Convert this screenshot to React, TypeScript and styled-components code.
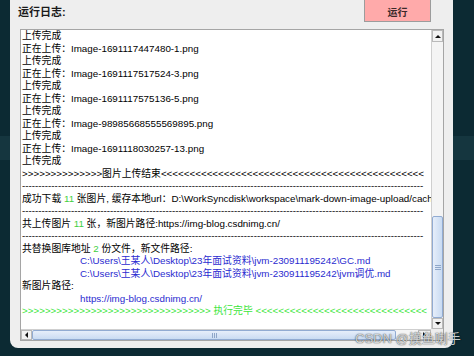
import React from 'react';
import styled, { createGlobalStyle } from 'styled-components';

const GlobalStyle = createGlobalStyle`
  html, body { margin: 0; padding: 0; }
  body {
    width: 474px;
    height: 356px;
    overflow: hidden;
    background: linear-gradient(
      to bottom,
      #0c2a33 0px, #0c2a33 136px,
      #15363f 136px, #15363f 160px,
      #0c2a33 160px, #0c2a33 356px
    );
    font-family: "Liberation Sans", "Noto Sans CJK SC", sans-serif;
  }
`;

const Page = styled.div`
  position: relative;
  width: 474px;
  height: 356px;
  box-sizing: border-box;
  padding: 0 21px 8px 10px;
  display: flex;
`;

const Panel = styled.div`
  flex: 1;
  background: #eeeeee;
  border-radius: 0 0 8px 8px;
  padding: 0 9px 7px 8px;
  display: flex;
  flex-direction: column;
  min-width: 0;
`;

const Header = styled.div`
  height: 29px;
  flex: none;
  display: flex;
  justify-content: space-between;
  align-items: flex-start;
`;

const Label = styled.div`
  padding-top: 5px;
  font-size: 11px;
  line-height: 15px;
  font-weight: bold;
  color: #1a1a1a;
`;

const RunButton = styled.button`
  width: 67px;
  height: 25px;
  margin-top: -3px;
  margin-right: 13px;
  padding: 3px 0 0;
  box-sizing: border-box;
  background: #ffaaaa;
  border: 1px solid #9c9c9c;
  font-family: "Liberation Sans", "Noto Sans CJK SC", sans-serif;
  font-size: 10px;
  font-weight: bold;
  color: #3a2a2a;
  display: flex;
  align-items: center;
  justify-content: center;
`;

const ScrollPane = styled.div`
  flex: 1;
  margin-left: 2px;
  border: 1px solid #a5a5a5;
  background: #ffffff;
  display: grid;
  grid-template-columns: 1fr 12px;
  grid-template-rows: 1fr 11px;
  min-height: 0;
`;

const Viewport = styled.div`
  overflow: hidden;
  padding-left: 1px;
  font-size: 9.8px;
  line-height: 12.5px;
  white-space: pre;
  color: #000000;
`;

const Row = styled.div<{ $indent?: boolean }>`
  height: 12.5px;
  padding-left: ${p => (p.$indent ? '58px' : '0')};
`;

const Seg = styled.span<{ $tone?: 'green' | 'blue' | 'lime' }>`
  color: ${p =>
    p.$tone === 'green' ? '#3fcf3f' :
    p.$tone === 'blue' ? '#2b2bd0' :
    p.$tone === 'lime' ? '#3de63d' : 'inherit'};
`;

const VScroll = styled.div`
  display: flex;
  flex-direction: column;
  background: #f4f4f4;
  border-left: 1px solid #cfcfcf;
  box-sizing: border-box;
`;

const HScroll = styled.div`
  display: flex;
  flex-direction: row;
  background: #f4f4f4;
  border-top: 1px solid #cfcfcf;
  box-sizing: border-box;
`;

const Corner = styled.div`
  background: #eeeeee;
`;

const ArrowBtn = styled.div<{ $w?: number; $h?: number }>`
  flex: none;
  width: ${p => (p.$w ? `${p.$w}px` : 'auto')};
  height: ${p => (p.$h ? `${p.$h}px` : 'auto')};
  box-sizing: border-box;
  background: #f2f2f2;
  border: 1px solid #b9b9b9;
  display: flex;
  align-items: center;
  justify-content: center;
`;

const Tri = styled.span<{ $dir: 'up' | 'down' | 'left' | 'right' }>`
  width: 0;
  height: 0;
  ${p =>
    p.$dir === 'up'
      ? 'border-left: 3px solid transparent; border-right: 3px solid transparent; border-bottom: 3px solid #111;'
      : p.$dir === 'down'
      ? 'border-left: 3px solid transparent; border-right: 3px solid transparent; border-top: 3px solid #111;'
      : p.$dir === 'left'
      ? 'border-top: 3px solid transparent; border-bottom: 3px solid transparent; border-right: 3px solid #111;'
      : 'border-top: 3px solid transparent; border-bottom: 3px solid transparent; border-left: 3px solid #111;'}
`;

const VTrack = styled.div`
  flex: 1;
  display: flex;
  flex-direction: column;
  justify-content: flex-end;
`;

const HTrack = styled.div`
  flex: 1;
  display: flex;
  flex-direction: row;
`;

const VThumb = styled.div`
  height: 102px;
  box-sizing: border-box;
  border: 1px solid #91abd2;
  border-radius: 2px;
  background: linear-gradient(to right, #e6eefa, #c9dbf2);
  display: flex;
  align-items: center;
  justify-content: center;
  &::after {
    content: '';
    width: 6px;
    height: 5px;
    background: repeating-linear-gradient(to bottom, #8ea6c8 0 1px, transparent 1px 2px);
  }
`;

const HThumb = styled.div`
  width: 364px;
  box-sizing: border-box;
  border: 1px solid #91abd2;
  border-radius: 2px;
  background: linear-gradient(to bottom, #e6eefa, #c9dbf2);
  display: flex;
  align-items: center;
  justify-content: center;
  &::after {
    content: '';
    width: 5px;
    height: 5px;
    background: repeating-linear-gradient(to right, #8ea6c8 0 1px, transparent 1px 2px);
  }
`;

const Watermark = styled.div`
  position: absolute;
  left: 355px;
  top: 331px;
  font-size: 13px;
  line-height: 16px;
  color: rgba(235, 238, 240, 0.85);
  text-shadow: 0 0 1px rgba(0, 0, 0, 0.75), 0 0 2px rgba(0, 0, 0, 0.3);
  white-space: nowrap;
  pointer-events: none;
`;

type Tone = 'green' | 'blue' | 'lime';
type Line = { segs: { t: string; tone?: Tone }[]; indent?: boolean };

const plain = (t: string): Line => ({ segs: [{ t }] });
const dash = '-'.repeat(123);

const lines: Line[] = [
  plain('上传完成'),
  plain('正在上传：Image-1691117447480-1.png'),
  plain('上传完成'),
  plain('正在上传：Image-1691117517524-3.png'),
  plain('上传完成'),
  plain('正在上传：Image-1691117575136-5.png'),
  plain('上传完成'),
  plain('正在上传：Image-98985668555569895.png'),
  plain('上传完成'),
  plain('正在上传：Image-1691118030257-13.png'),
  plain('上传完成'),
  plain(`${'>'.repeat(14)}图片上传结束${'<'.repeat(46)}`),
  plain(dash),
  {
    segs: [
      { t: '成功下载 ' },
      { t: '11', tone: 'green' },
      { t: ' 张图片, 缓存本地url：D:\\WorkSyncdisk\\workspace\\mark-down-image-upload/cache/jvm-230911195242' },
    ],
  },
  plain(dash),
  {
    segs: [
      { t: '共上传图片 ' },
      { t: '11', tone: 'green' },
      { t: ' 张，新图片路径:https://img-blog.csdnimg.cn/' },
    ],
  },
  plain(dash),
  {
    segs: [
      { t: '共替换图库地址 ' },
      { t: '2', tone: 'green' },
      { t: ' 份文件，新文件路径:' },
    ],
  },
  { segs: [{ t: 'C:\\Users\\王某人\\Desktop\\23年面试资料\\jvm-230911195242\\GC.md', tone: 'blue' }], indent: true },
  { segs: [{ t: 'C:\\Users\\王某人\\Desktop\\23年面试资料\\jvm-230911195242\\jvm调优.md', tone: 'blue' }], indent: true },
  plain('新图片路径:'),
  { segs: [{ t: 'https://img-blog.csdnimg.cn/', tone: 'blue' }], indent: true },
  { segs: [{ t: `${'>'.repeat(33)} 执行完毕 ${'<'.repeat(30)}`, tone: 'lime' }] },
];

export default function App() {
  return (
    <>
      <GlobalStyle />
      <Page>
        <Panel>
          <Header>
            <Label>运行日志:</Label>
            <RunButton>运行</RunButton>
          </Header>
          <ScrollPane>
            <Viewport>
              {lines.map((l, i) => (
                <Row key={i} $indent={l.indent}>
                  {l.segs.map((s, j) => (
                    <Seg key={j} $tone={s.tone}>{s.t}</Seg>
                  ))}
                </Row>
              ))}
            </Viewport>
            <VScroll>
              <ArrowBtn $h={12}><Tri $dir="up" /></ArrowBtn>
              <VTrack><VThumb /></VTrack>
              <ArrowBtn $h={11}><Tri $dir="down" /></ArrowBtn>
            </VScroll>
            <HScroll>
              <ArrowBtn $w={11}><Tri $dir="left" /></ArrowBtn>
              <HTrack><HThumb /></HTrack>
              <ArrowBtn $w={13}><Tri $dir="right" /></ArrowBtn>
            </HScroll>
            <Corner />
          </ScrollPane>
        </Panel>
        <Watermark>CSDN @摸鱼喇手</Watermark>
      </Page>
    </>
  );
}
